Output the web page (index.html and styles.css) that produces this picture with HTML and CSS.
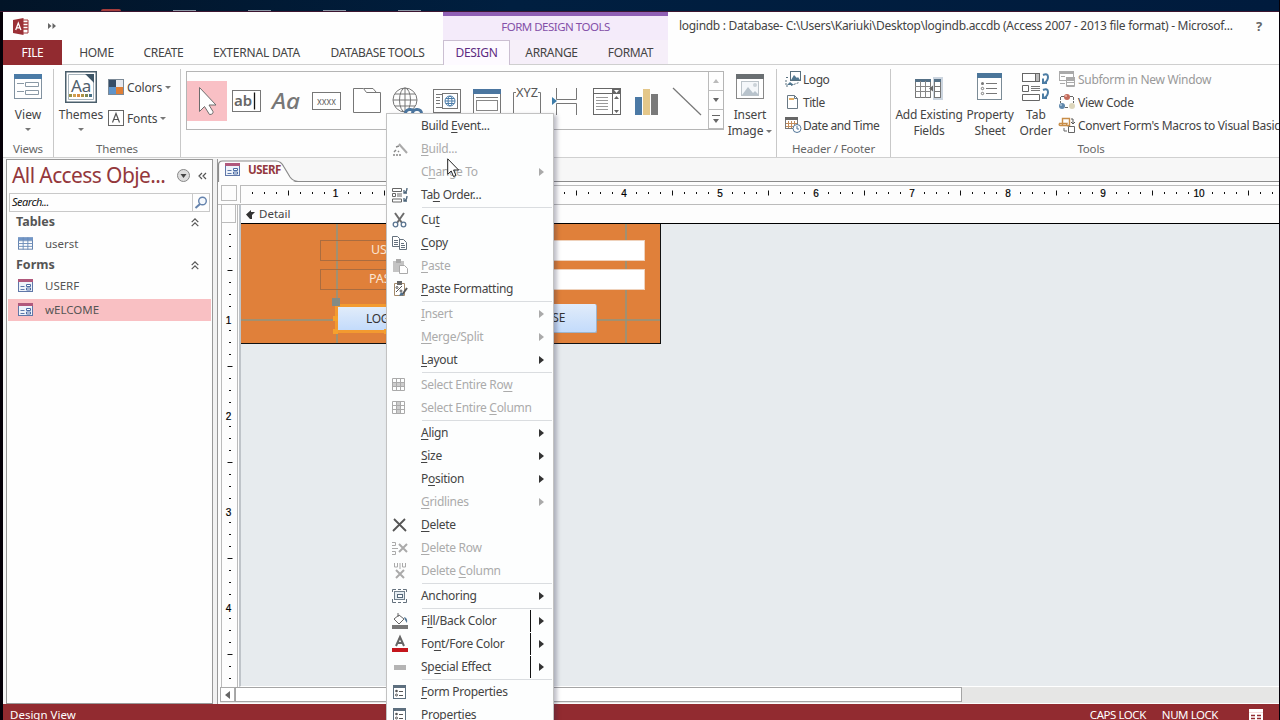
FILE: index.html
```
<!DOCTYPE html>
<html lang="en">
<head>
<meta charset="utf-8">
<title>logindb : Database</title>
<link rel="stylesheet" href="styles.css">
</head>
<body>
<svg width="0" height="0" class="defs">
  <defs>
    <symbol id="form" viewBox="0 0 15 14"><rect x=".5" y=".5" width="14" height="12" fill="#eef3fa" stroke="#6077a8"/><rect width="15" height="3" fill="#b0587c"/><path d="M2.500 7.500h4M2.500 10.500h4" stroke="#5b78aa"/><path d="M8.500 5.500h4v2h-4zM8.500 9h4v2h-4z" fill="#fff" stroke="#4c6ca5"/></symbol>
    <symbol id="props" viewBox="0 0 16 16"><rect x="1.500" y="1.500" width="12" height="13" fill="#fff" stroke="#5d6f7e"/><path d="M1 1h13v3H1z" fill="#5d6f7e"/><circle cx="4.500" cy="7" r="1.300" fill="#555"/><circle cx="4.500" cy="11" r="1" fill="none" stroke="#555"/><path d="M7 7.500h4M7 11.500h4" stroke="#555"/></symbol>
    <symbol id="taborder" viewBox="0 0 16 16"><path d="M.5 1.500h9v3h-9zM.5 6.500h3v3h-3zM.5 12h9v3h-9zM5 7h5M5 9h5" fill="none" stroke="#666"/><path d="M15 1q0 4-3 5m0-3v3h3M15 9q0 4-3 5m0-3v3h3" fill="none" stroke="#4a6378" stroke-width="1.300"/></symbol>
    <symbol id="up2" viewBox="0 0 8 9"><path d="M.7 4.200 4 .9l3.300 3.300M.7 8.200 4 4.900l3.300 3.300" fill="none" stroke="#555" stroke-width="1.200"/></symbol>
    <pattern id="hdots" width="96" height="20" patternUnits="userSpaceOnUse"><path d="M11.500 6v2M23.500 6v2M35.500 6v2M59.500 6v2M71.500 6v2M83.500 6v2M47.500 4.500v5" stroke="#111"/></pattern>
    <pattern id="vdots" y="-1" width="15" height="96" patternUnits="userSpaceOnUse"><path d="M7 12.500h2M7 24.500h2M7 36.500h2M7 60.500h2M7 72.500h2M7 84.500h2M5.500 48.500h5" stroke="#111"/></pattern>
  </defs>
</svg>
<div class="screen">
  <div class="desktop"><i class="red"></i><i></i><i></i><i></i><i></i></div>
  <div class="window">
    <header class="top">
      <div class="quick">
        <svg width="18" height="17" viewBox="0 0 18 17"><path d="M9 2h6v13H9z" fill="#fff" stroke="#a4373a"/><path d="M10 5h5M10 8h5M10 11h5" stroke="#a4373a" stroke-width="1.500"/><path d="M0 2 10.500 0v17L0 15z" fill="#9b3036"/><path d="M2.700 12 5.300 5l2.600 7M3.600 9.800h3.400" fill="none" stroke="#fff" stroke-width="1.300"/></svg>
        <svg width="8" height="6" viewBox="0 0 8 6"><path d="M0 0 3.500 3 0 6zM4.500 0 8 3 4.500 6z" fill="#666"/></svg>
      </div>
      <div class="context">FORM DESIGN TOOLS</div>
      <div class="title">logindb : Database- C:\Users\Kariuki\Desktop\logindb.accdb (Access 2007 - 2013 file format) - Microsof...</div>
      <div class="help">?</div>
    </header>
    <nav class="tabs">
      <span class="file">FILE</span><span class="t1">HOME</span><span class="t2">CREATE</span><span class="t3">EXTERNAL DATA</span><span class="t4">DATABASE TOOLS</span><span class="active">DESIGN</span><span class="t5">ARRANGE</span><span class="t6">FORMAT</span><span class="rest"></span>
    </nav>
    <section class="ribbon">
      <div class="group views">
        <div class="big"><svg width="28" height="26" viewBox="0 0 28 26"><rect x=".5" y=".5" width="27" height="24" fill="#fff" stroke="#8292a0"/><path d="M0 0h28v5H0z" fill="#4b7ba6"/><path d="M3 9.500h7M3 17.500h7" stroke="#8a99a5"/><path d="M11.500 8.500h13v4h-13zM11.500 16.500h13v4h-13z" fill="none" stroke="#8a99a5"/></svg><span>View</span><b class="caret"></b></div>
        <footer>Views</footer>
      </div>
      <div class="group themes">
        <div class="cols">
          <div class="big"><svg width="32" height="32" viewBox="0 0 32 32"><rect x=".75" y=".75" width="30.500" height="30.500" fill="#fff" stroke="#4b5f6c" stroke-width="1.500"/><path d="M3.500 28.500v-25h17l8 8v17z" fill="none" stroke="#a8b4bc"/><path d="M20 3h9v9z" fill="#3d5566"/><path d="M21 4v7h7z" fill="#fff"/><text x="6" y="21" font-size="17" fill="#50606c">Aa</text><g><path d="M4 23h3v3H4z" fill="#9a9448"/><path d="M8 23h3v3H8z" fill="#d0a050"/><path d="M12 23h3v3h-3z" fill="#d88b3e"/><path d="M16 23h3v3h-3z" fill="#b09344"/><path d="M20 23h3v3h-3z" fill="#7d8853"/><path d="M24 23h3v3h-3z" fill="#467088"/></g></svg><span>Themes</span><b class="caret"></b></div>
          <div class="stack">
            <div><svg width="16" height="16" viewBox="0 0 16 16"><path d="M0 0h16v16H0z" fill="#7b8996"/><path d="M1 1h7v7H1z" fill="#354c67"/><path d="M8 1h7v7H8z" fill="#e5e8ee"/><path d="M1 8h7v7H1z" fill="#5f94ca"/><path d="M8 8h7v7H8z" fill="#df7e36"/></svg><span>Colors</span><b class="caret"></b></div>
            <div><svg width="16" height="16" viewBox="0 0 16 16"><rect x=".5" y=".5" width="15" height="15" fill="#fff" stroke="#666"/><path d="M4.500 12.500 8 3.500l3.500 9M5.700 9.500h4.600" fill="none" stroke="#555" stroke-width="1.200"/></svg><span>Fonts</span><b class="caret"></b></div>
          </div>
        </div>
        <footer>Themes</footer>
      </div>
      <div class="group controls">
        <div class="gallery">
          <div class="cell sel"><svg width="30" height="40" viewBox="0 0 30 40"><path d="M7.500 6.500v24l5-5 5 8q4 0 3.500-3l-4-6.500h7z" fill="#fff" stroke="#6c6c6c" stroke-linejoin="round"/></svg></div>
          <div class="cell"><svg width="30" height="30" viewBox="0 0 30 30"><rect x=".5" y="4.500" width="28" height="21" fill="#fff" stroke="#777"/><text x="2" y="20" font-size="15" font-weight="600" fill="#666">ab</text><path d="M22.500 6.500v17" stroke="#111" stroke-width="1.300"/></svg></div>
          <div class="cell"><svg width="30" height="30" viewBox="0 0 30 30"><text x="0" y="23" font-size="22" font-style="italic" font-weight="500" fill="#777" textLength="28" lengthAdjust="spacingAndGlyphs">Aa</text></svg></div>
          <div class="cell"><svg width="30" height="30" viewBox="0 0 30 30"><rect x=".5" y="6.500" width="28" height="17" fill="#fff" stroke="#777"/><text x="5" y="18.500" font-size="11" fill="#666" textLength="19" lengthAdjust="spacingAndGlyphs">xxxx</text></svg></div>
          <div class="cell"><svg width="30" height="30" viewBox="0 0 30 30"><path d="M1.500 26.500v-24h10l3 4h14v20z" fill="#fff" stroke="#777"/><path d="M12 2.500h9l3 3.500" fill="none" stroke="#777"/></svg></div>
          <div class="cell"><svg width="32" height="30" viewBox="0 0 32 30"><g fill="none" stroke="#777"><circle cx="14" cy="14" r="12"/><ellipse cx="14" cy="14" rx="5.500" ry="12"/><path d="M14 2v24M2 14h24M4 8h20M4 20h20"/></g><g fill="#fff" stroke="#4b769f" stroke-width="3"><rect x="14.500" y="23.500" width="9" height="8" rx="4"/><rect x="21.500" y="23.500" width="9" height="8" rx="4"/></g></svg></div>
          <div class="cell"><svg width="30" height="30" viewBox="0 0 30 30"><rect x="1.500" y="3.500" width="27" height="23" fill="#fff" stroke="#777"/><path d="M4 8.500h6M4 11.500h4M4 14.500h4M4 17.500h4M4 21.500h6" stroke="#777"/><rect x="10.500" y="7.500" width="15" height="15" fill="#fff" stroke="#777"/><g fill="none" stroke="#4c7da9"><circle cx="18" cy="15" r="5"/><ellipse cx="18" cy="15" rx="2" ry="5"/><path d="M13 15h10M14 12.500h8M14 17.500h8"/></g></svg></div>
          <div class="cell"><svg width="30" height="30" viewBox="0 0 30 30"><rect x="1.500" y="3.500" width="27" height="24" fill="#fff" stroke="#777"/><path d="M1 3h28v5H1z" fill="#4b76a0"/><path d="M4 11.500h22" stroke="#777"/><rect x="4.500" y="14.500" width="21" height="10" fill="none" stroke="#888"/></svg></div>
          <div class="cell"><svg width="30" height="30" viewBox="0 0 30 30"><path d="M4 6.500H1.500v22h27v-22H26" fill="none" stroke="#777"/><text x="4" y="11" font-size="12" fill="#555" textLength="22" lengthAdjust="spacingAndGlyphs">XYZ</text></svg></div>
          <div class="cell"><svg width="30" height="30" viewBox="0 0 30 30"><path d="M4.500 2v11.500h20V2M4.500 29V17.500h20V29" fill="none" stroke="#777"/><path d="m0 11 5 4-5 4z" fill="#3e7da9"/></svg></div>
          <div class="cell"><svg width="30" height="30" viewBox="0 0 30 30"><rect x="1.500" y="2.500" width="27" height="26" fill="#fff" stroke="#666"/><path d="M1 7.500h28M20.500 2v26" stroke="#666"/><path d="M20 3h8v5h-8z" fill="#666"/><path d="m22 4 2.500 3L27 4z" fill="#fff"/><path d="M4 11.500h12M4 14.500h12M4 17.500h12M4 20.500h12M4 23.500h12" stroke="#999"/><path d="m22 13 2.500-3 2.500 3zM22 24l2.500 3 2.500-3z" fill="#666"/></svg></div>
          <div class="cell"><svg width="30" height="30" viewBox="0 0 30 30"><path d="M3 11h7v18H3z" fill="#4b79a5"/><path d="M11 3h7v26h-7z" fill="#e4c78a"/><path d="M19 8h7v21h-7z" fill="#7a7a7a"/></svg></div>
          <div class="cell"><svg width="30" height="30" viewBox="0 0 30 30"><path d="m1 2 28 27" stroke="#777" stroke-width="1.200"/></svg></div>
          <div class="scroll"><span><svg width="6" height="4"><path d="m0 4 3-4 3 4z" fill="#bbb"/></svg></span><span><svg width="6" height="4"><path d="m0 0 3 4 3-4z" fill="#666"/></svg></span><span><svg width="8" height="8"><path d="M0 .5h8" stroke="#666"/><path d="m1 4 3 4 3-4z" fill="#666"/></svg></span></div>
        </div>
        <div class="big insert"><svg width="28" height="26" viewBox="0 0 28 26"><rect x=".5" y=".5" width="27" height="24" fill="#fff" stroke="#888"/><path d="M0 0h28v5H0z" fill="#6a6f72"/><rect x="5.500" y="7.500" width="17" height="14" fill="#f4f7fa" stroke="#bcc4ca"/><path d="m6 21 6-8 5 6 2-2 4 4z" fill="#b8c3cc"/><circle cx="19" cy="11" r="2" fill="#cbd3d9"/></svg><span>Insert</span><span>Image <b class="caret"></b></span></div>
      </div>
      <div class="group hf">
        <div class="list">
          <div><svg width="16" height="16" viewBox="0 0 16 16"><rect x="5.500" y=".5" width="10" height="9" fill="#fff" stroke="#58707e"/><path d="m6 9 3-5 3 3 1-1 2 3z" fill="#527891"/><path d="M1 6.500h3M1 9v6h3M6 14.500l8-3" fill="none" stroke="#58707e" stroke-dasharray="2 1"/><path d="m2 14 3-3 4 3z" fill="#527891"/></svg><span>Logo</span></div>
          <div><svg width="16" height="16" viewBox="0 0 16 16"><path d="M2.500 1.500h7l3 3v10h-10z" fill="#fff" stroke="#697985"/><path d="M9.500 1.500v3h3" fill="none" stroke="#697985"/><path d="M4 5h5" stroke="#e4ae62" stroke-width="2"/></svg><span>Title</span></div>
          <div><svg width="16" height="16" viewBox="0 0 16 16"><rect x=".5" y=".5" width="12" height="11" fill="#fff" stroke="#777"/><path d="M0 0h13v3H0z" fill="#666"/><path d="M3.500 4v7M6.500 4v7M9.500 4v7M1 6.500h11M1 9.500h11" stroke="#c38c5b"/><circle cx="12" cy="11.500" r="4" fill="#fff" stroke="#53779a"/><path d="M12 9v3h2" fill="none" stroke="#53779a"/></svg><span>Date and Time</span></div>
        </div>
        <footer>Header / Footer</footer>
      </div>
      <div class="group tools">
        <div class="cols">
          <div class="big add"><svg width="28" height="28" viewBox="0 0 28 28"><path d="M18 1h10v23H18z" fill="#ccd5df"/><rect x=".5" y="3.500" width="15" height="18" fill="#fff" stroke="#777"/><path d="M0 3h16v3H0z" fill="#557086"/><path d="M0 10.500h16M0 15.500h16M5.500 5v17M10.500 5v17" stroke="#888"/><rect x="19.500" y="3.500" width="6" height="18" fill="#fff" stroke="#777"/><path d="M19 3h7v3h-7z" fill="#557086"/><path d="M19 10.500h7M19 15.500h7" stroke="#777"/><path d="m14 12.500 4-3v6z" fill="#666"/></svg><span>Add Existing</span><span>Fields</span></div>
          <div class="big prop"><svg width="26" height="28" viewBox="0 0 26 28"><rect x=".5" y=".5" width="24" height="26" fill="#fff" stroke="#7b8b96"/><path d="M0 0h25v5H0z" fill="#4b769a"/><circle cx="5.500" cy="10.500" r="1.500" fill="#777"/><circle cx="5.500" cy="15.500" r="1.200" fill="none" stroke="#777"/><circle cx="5.500" cy="20.500" r="1.200" fill="none" stroke="#777"/><path d="M9 10.500h11M9 15.500h11M9 20.500h11" stroke="#777"/></svg><span>Property</span><span>Sheet</span></div>
          <div class="big order"><svg width="28" height="29" viewBox="0 0 28 29"><rect x=".5" y=".5" width="17" height="8" fill="#fff" stroke="#666"/><path d="M14 1h3v7h-3z" fill="#bbb"/><path d="M13.500 0v9" stroke="#666"/><path d="M.5 12.500h6v6h-6zM.5 21.500h17v6H.5z" fill="#fff" stroke="#666"/><path d="M9 13.500h9M9 15.500h9M9 17.500h9" stroke="#777"/><path d="M21 2q5-2 5 2t-4 6m-1-4.500V10h4M21 17q5-2 5 2t-4 6m-1-4.500V25h4" fill="none" stroke="#4b7ca4" stroke-width="2"/></svg><span>Tab</span><span>Order</span></div>
          <div class="list">
            <div class="off"><svg width="16" height="16" viewBox="0 0 16 16"><rect x=".5" y=".5" width="14" height="9" fill="#fff" stroke="#aaa"/><path d="M0 0h15v3H0zM7 6h9v3H7z" fill="#aaa"/><path d="M2 5.500h4M1 12.500h5M8 11.500h7M8 14.500h7M7.500 8v7.500h8V8" fill="none" stroke="#aaa"/></svg><span>Subform in New Window</span></div>
            <div><svg width="16" height="16" viewBox="0 0 16 16"><path d="M5 2.500H1.500V9M11 2.500h3.500V9M6 13.500h4" fill="none" stroke="#666" stroke-dasharray="3 1"/><circle cx="8" cy="3" r="3" fill="#c36b5b"/><circle cx="3" cy="12" r="3" fill="#6088ac"/><circle cx="13" cy="12" r="3" fill="#ddd6bb"/><circle cx="7" cy="2" r="1" fill="#efb4a9"/><circle cx="2" cy="11" r="1" fill="#adc5d9"/></svg><span>View Code</span></div>
            <div><svg width="16" height="16" viewBox="0 0 16 16"><path d="M3.500 9V1.500h7v7H1.500q-2 0-1-2H8q-1 2 1 2.500" fill="none" stroke="#c88d47" stroke-width="1.400"/><path d="M12 2h2v5m-2-2 2 2 2-2" fill="none" stroke="#555"/><path d="M9.500 9.500h6v6h-6zM5 11v3h3" fill="none" stroke="#666"/></svg><span>Convert Form's Macros to Visual Basic</span></div>
          </div>
        </div>
        <footer>Tools</footer>
      </div>
    </section>
    <main class="work">
      <aside class="nav">
        <h1><span>All Access Obje...</span><svg width="13" height="13" viewBox="0 0 13 13"><circle cx="6.500" cy="6.500" r="6" fill="#ddd" stroke="#888"/><path d="m3.500 5 3 4 3-4z" fill="#444"/></svg><svg width="9" height="8" viewBox="0 0 9 8"><path d="M4 1 1 4l3 3M8 1 5 4l3 3" fill="none" stroke="#555" stroke-width="1.200"/></svg></h1>
        <div class="search"><span>Search...</span><i><svg width="14" height="13" viewBox="0 0 14 13"><circle cx="8.500" cy="5" r="3.800" fill="#f4f8fd" stroke="#6583ad" stroke-width="1.400"/><path d="m6 8-4.500 4" stroke="#6583ad" stroke-width="2"/></svg></i></div>
        <div class="head">Tables<svg width="8" height="9"><use href="#up2"/></svg></div>
        <div class="item"><svg width="16" height="14" viewBox="0 0 16 14"><rect x=".5" y=".5" width="15" height="12" fill="#fff" stroke="#5d7daa"/><path d="M0 0h16v3H0z" fill="#7196c7"/><path d="M0 3.500h16M0 6.500h16M0 9.500h16M5.500 0v13M10.500 0v13" stroke="#6b8cb8"/></svg>userst</div>
        <div class="head forms">Forms<svg width="8" height="9"><use href="#up2"/></svg></div>
        <div class="item f"><svg width="15" height="14"><use href="#form"/></svg>USERF</div>
        <div class="item on"><svg width="15" height="14"><use href="#form"/></svg>wELCOME</div>
      </aside>
      <div class="splitter"></div>
      <section class="doc">
        <div class="doctabs">
          <svg class="tabshape" width="80" height="26" viewBox="0 0 80 26"><path d="M.5 25V5q0-4 4-4H58q5 0 8 6l6 11q3 4 8 4.500V26H0z" fill="#fdfdfd"/><path d="M.5 25V5q0-4 4-4H58q5 0 8 6l6 10q3 4 8 4.500" fill="none" stroke="#8b8b8b" stroke-width="1.200"/></svg>
          <div class="doctab"><svg width="15" height="14"><use href="#form"/></svg>USERF</div>
        </div>
        <div class="hrule"><i></i><svg width="1039" height="18"><rect width="1039" height="18" fill="url(#hdots)"/><g><text x="94.500" y="11">1</text><text x="191" y="11">2</text><text x="287" y="11">3</text><text x="383" y="11">4</text><text x="479" y="11">5</text><text x="575" y="11">6</text><text x="671" y="11">7</text><text x="767" y="11">8</text><text x="862" y="11">9</text><text x="958" y="11">10</text></g></svg></div>
        <div class="canvasrow">
          <div class="vrule"><i></i><svg width="15" height="464"><rect width="15" height="464" fill="url(#vdots)"/><g><text x="6.500" y="101">1</text><text x="6.500" y="197">2</text><text x="6.500" y="293">3</text><text x="6.500" y="389">4</text></g></svg></div>
          <div class="canvas">
            <div class="detail"><svg width="9" height="9" viewBox="0 0 9 9"><path d="M5 0v2h4L6 5v4H4L0 4.500z" fill="#333"/></svg>Detail</div>
            <div class="form">
              <i class="guide v1"></i><i class="guide v2"></i><i class="guide h"></i>
              <div class="lab a"><span>USERNAME</span></div><div class="box a"></div>
              <div class="lab b"><span>PASSWORD</span></div><div class="box b"></div>
              <div class="btn login">LOGIN</div><div class="btn close">CLOSE</div>
              <i class="sq"></i>
              <i class="grip g1"></i><i class="grip g2"></i><i class="grip g3"></i>
            </div>
          </div>
        </div>
        <div class="hscroll"><b><svg width="5" height="8"><path d="M5 0v8L0 4z" fill="#666"/></svg></b><i></i></div>
      </section>
    </main>
    <div class="status"><span>Design View</span><span class="caps">CAPS LOCK</span><span>NUM LOCK</span><svg width="14" height="12" viewBox="0 0 14 12"><path d="M0 0h14v12H0z" fill="#fff"/><path d="M0 3.500h14" stroke="#f4dada"/><path d="M2 6.500h4M2 9.500h4M8 6.500h4M8 9.500h4" stroke="#922b30" stroke-width="1.500"/></svg></div>
  </div>
  <div class="menu">
    <div><i></i>Build <u>E</u>vent...</div>
    <div class="off"><i><svg width="16" height="16" viewBox="0 0 16 16"><path d="m7 3 8 9" stroke="#aaa" stroke-width="2"/><path d="M1 14h2M4 14h2M7 14h2M2 11l2-2M4 6l3-1M6 10l1 1" stroke="#888" stroke-width="1.500"/></svg></i><u>B</u>uild...</div>
    <div class="off sub"><i></i>C<u>h</u>ange To</div>
    <div><i><svg width="16" height="16"><use href="#taborder"/></svg></i>Ta<u>b</u> Order...</div>
    <hr>
    <div><i><svg width="16" height="16" viewBox="0 0 16 16"><path d="m3 1 7 10M12 1 5 11" stroke="#6c6c6c" stroke-width="2"/><circle cx="3.500" cy="12.500" r="2.300" fill="#fff" stroke="#5a7591" stroke-width="1.300"/><circle cx="11.500" cy="12.500" r="2.300" fill="#fff" stroke="#5a7591" stroke-width="1.300"/></svg></i>Cu<u>t</u></div>
    <div><i><svg width="16" height="16" viewBox="0 0 16 16"><path d="M.5 1.500h5l2 2v8h-7zM7.500 4.500h4l3 3v7h-7z" fill="#fff" stroke="#64717d"/><path d="M2 5.500h4M2 7.500h4M2 9.500h4M9 8.500h3M9 10.500h4M9 12.500h4" stroke="#64717d"/></svg></i><u>C</u>opy</div>
    <div class="off"><i><svg width="16" height="16" viewBox="0 0 16 16"><path d="M1 3h11v11H1z" fill="#c4c4c4"/><path d="M4 1h5v4H4z" fill="#aaa"/><path d="M7.500 7.500h5l3 3v5h-8z" fill="#fff" stroke="#aaa"/></svg></i><u>P</u>aste</div>
    <div><i><svg width="16" height="16" viewBox="0 0 16 16"><path d="M2.500 2.500h10v12h-10z" fill="#fff" stroke="#a48b6c"/><path d="M5 0h5v4H5z" fill="#666"/><path d="m4 11 6-6" stroke="#555"/><circle cx="5" cy="6.500" r="1" fill="none" stroke="#555"/><circle cx="9" cy="10" r="1" fill="none" stroke="#555"/><path d="m15 7-5 7" stroke="#555" stroke-width="2"/><path d="m7 15 2-4 3 3z" fill="#4e7190"/></svg></i><u>P</u>aste Formatting</div>
    <hr>
    <div class="off sub"><i></i><u>I</u>nsert</div>
    <div class="off sub"><i></i><u>M</u>erge/Split</div>
    <div class="sub"><i></i><u>L</u>ayout</div>
    <hr>
    <div class="off"><i><svg width="14" height="14" viewBox="0 0 14 14"><path d="M1 5h12v4H1z" fill="#ccc"/><path d="M.5.5h12v12H.5zM0 4.500h13M0 8.500h13M4.500 0v13M8.500 0v13" fill="none" stroke="#aaa"/></svg></i>Select Entire Ro<u>w</u></div>
    <div class="off"><i><svg width="14" height="14" viewBox="0 0 14 14"><path d="M5 1h4v12H5z" fill="#ccc"/><path d="M.5.5h12v12H.5zM0 4.500h13M0 8.500h13M4.500 0v13M8.500 0v13" fill="none" stroke="#aaa"/></svg></i>Select Entire <u>C</u>olumn</div>
    <hr>
    <div class="sub"><i></i><u>A</u>lign</div>
    <div class="sub"><i></i><u>S</u>ize</div>
    <div class="sub"><i></i>P<u>o</u>sition</div>
    <div class="off sub"><i></i><u>G</u>ridlines</div>
    <div><i><svg width="16" height="16" viewBox="0 0 16 16"><path d="m2 2 12 12M13 2 1 14" stroke="#555" stroke-width="1.800"/></svg></i><u>D</u>elete</div>
    <div class="off"><i><svg width="16" height="16" viewBox="0 0 16 16"><path d="m7 4 8 8M15 4l-8 8" stroke="#aaa" stroke-width="2"/><path d="M0 2.500h3.500v3H0M0 8.500h6M0 11.500h3.500v3H0" fill="none" stroke="#aaa"/></svg></i><u>D</u>elete Row</div>
    <div class="off"><i><svg width="16" height="16" viewBox="0 0 16 16"><path d="m4 7 8 8M12 7l-8 8" stroke="#aaa" stroke-width="2"/><path d="M2.500 0v4h3V0M8 0v6M10.500 0v4h3V0" fill="none" stroke="#aaa"/></svg></i>Delete <u>C</u>olumn</div>
    <hr>
    <div class="sub"><i><svg width="16" height="16" viewBox="0 0 16 16"><path d="M.5 4V1.500H4M11 1.500h3.500V4M.5 11v3.500H4M11 14.500h3.500V11M6 1.500h3M6 14.500h3" fill="none" stroke="#64717d"/><rect x="2.500" y="3.500" width="10" height="8" fill="#e6edf2" stroke="#71808c"/><rect x="5.500" y="6.500" width="5" height="3" fill="#fff" stroke="#56697a"/></svg></i>Anchoring</div>
    <hr>
    <div class="sub split"><i><svg width="16" height="16" viewBox="0 0 16 16"><path d="m2 6 5-4 5 4-5 5zM6 0v4" fill="#fff" stroke="#666"/><path d="M12 4q4 1 3 6l-2-3z" fill="#4f7494"/><path d="M0 12h16v4H0z" fill="#777"/></svg></i>F<u>il</u>l/Back Color</div>
    <div class="sub split"><i><svg width="16" height="16" viewBox="0 0 16 16"><path d="m4 10 4-9 4 9M5.500 7h5" fill="none" stroke="#666" stroke-width="2"/><path d="M0 12h16v4H0z" fill="#c4161c"/></svg></i>Fo<u>n</u>t/Fore Color</div>
    <div class="sub split"><i><svg width="16" height="16" viewBox="0 0 16 16"><path d="M2 6h12v5H2z" fill="#b4b4b4"/></svg></i>Sp<u>e</u>cial Effect</div>
    <hr>
    <div><i><svg width="16" height="16"><use href="#props"/></svg></i><u>F</u>orm Properties</div>
    <div><i><svg width="16" height="16"><use href="#props"/></svg></i>Propert<u>i</u>es</div>
  </div>
  <svg class="pointer" width="13" height="20" viewBox="0 0 13 20"><path d="M.7.8v15.500l3.500-3.300 2.300 5.500 2.500-1-2.400-5.500h5z" fill="#fff" stroke="#222"/></svg>
</div>
</body>
</html>
```
FILE: styles.css
```
* { box-sizing: border-box; }
body { margin: 0; font: 12px/16px "Noto Sans", "Open Sans", sans-serif; letter-spacing: -0.1px; color: #444; }
svg { flex: none; display: block; overflow: visible; }
.defs { position: absolute; }
.screen { position: relative; width: 1280px; height: 720px; overflow: hidden; background: #050008; padding: 0 1px 0 3px; display: flex; flex-direction: column; }
.desktop { height: 12px; flex: none; margin-left: -3px; background: linear-gradient(90deg, #021427, #001f40 40%, #001b3d); display: flex; align-items: flex-end; gap: 52px; padding-left: 101px; border-bottom: 1px solid #3c1630; }
.desktop i { width: 23px; height: 1px; background: #8b97a5; }
.desktop i.red { width: 20px; height: 2px; background: #a63d3c; border-radius: 8px 8px 0 0; }
.window { flex: 1; min-height: 0; background: #fefefe; display: flex; flex-direction: column; }

.top { height: 28px; flex: none; display: flex; align-items: center; }
.quick { width: 440px; padding-left: 10px; display: flex; align-items: center; gap: 17px; }
.context { width: 225px; height: 28px; border-top: 4px solid #8f5fb4; background: #f4ebfa; color: #8450a8; text-align: center; line-height: 22px; font-size: 11.5px; letter-spacing: -0.5px; }
.title { width: 573px; padding: 0 0 0 11px; white-space: nowrap; font-size: 12px; line-height: 28px; letter-spacing: -0.295px; }
.help { margin-left: 15px; font-weight: 700; font-size: 13px; color: #666; }

.tabs { height: 25px; flex: none; display: flex; line-height: 25px; letter-spacing: -0.35px; }
.tabs span { text-align: center; border-bottom: 1px solid #cfcfcf; white-space: nowrap; flex: none; }
.tabs .file { width: 59px; background: #922b30; color: #fff; border-color: #922b30; }
.t1 { width: 69px; } .t2 { width: 65px; } .t3 { width: 121px; } .t4 { width: 126px; padding-right: 5px; }
.tabs .t3 { letter-spacing: -0.2px; }
.tabs .active { width: 67px; background: #fdfaff; border: 1px solid #cbbfd2; border-bottom: 0; line-height: 23px; color: #5e2c82; }
.tabs .t5 { width: 83px; background: #f6eff9; }
.tabs .t6 { width: 75px; background: #f6eff9; }
.tabs .rest { flex: 1; }

.ribbon { height: 93px; flex: none; display: flex; border-bottom: 1px solid #d0d0d0; overflow: hidden; letter-spacing: 0; }
.group { display: flex; flex-direction: column; position: relative; flex: none; border-right: 1px solid #c8c8c8; height: 88px; margin-top: 4px; padding-top: 2px; }
.group footer { margin-top: auto; height: 17px; line-height: 17px; text-align: center; color: #666; font-size: 11.5px; letter-spacing: -0.15px; }
.views { width: 51px; } .themes { width: 127px; } .hf { width: 114px; }
.controls { width: 596px; flex-direction: row; padding: 2px 0 0 5px; }
.tools { width: 388px; border: 0; }
.cols { display: flex; }
.tools .cols { height: 66px; }
.tools .cols > * { flex: none; }
.big { display: flex; flex-direction: column; align-items: center; white-space: nowrap; }
.big > svg { height: 26px; margin-bottom: 7px; }
.big span { line-height: 16px; }
.caret { display: inline-block; width: 0; height: 0; border: 3px solid transparent; border-top: 3px solid #777; border-bottom: 0; vertical-align: middle; }
.big > .caret { margin-top: 5px; }
.views .big { padding-top: 3px; }
.themes .big { width: 54px; }
.themes .big > svg { height: 32px; margin-bottom: 4px; }
.stack { padding: 8px 0 0 0; display: flex; flex-direction: column; gap: 15px; letter-spacing: -0.15px; }
.stack div { display: flex; align-items: center; gap: 3px; height: 16px; }
.stack span { position: relative; top: 1px; }
.gallery { width: 538px; height: 59px; border: 1px solid #b5b5b5; display: flex; align-items: center; flex: none; overflow: hidden; }
.cell { width: 40px; height: 40px; display: flex; align-items: center; justify-content: center; flex: none; }
.cell.sel { background: #f9c0c5; }
.scroll { margin-left: auto; align-self: stretch; width: 15px; border-left: 1px solid #bbb; display: flex; flex-direction: column; flex: none; background: #fefefe; }
.scroll span { flex: 1; display: flex; align-items: center; justify-content: center; border-bottom: 1px solid #bbb; }
.insert { width: 52px; padding-top: 3px; letter-spacing: -0.1px; }
.list { display: flex; flex-direction: column; gap: 7px; padding-left: 8px; letter-spacing: -0.3px; }
.list div { display: flex; align-items: center; height: 16px; gap: 3px; white-space: nowrap; }
.list span { position: relative; top: 1px; }
.hf .list div { gap: 2px; letter-spacing: -0.45px; }
.tools .off { color: #999; }
.add { width: 76px; padding-top: 5px; letter-spacing: -0.2px; } .add > svg { height: 28px; margin-bottom: 3px; }
.prop { width: 46px; padding-top: 2px; letter-spacing: -0.2px; } .prop > svg { height: 28px; margin-bottom: 6px; }
.order { width: 46px; padding-top: 2px; } .order > svg { height: 29px; margin-bottom: 5px; }
.tools .list { padding-left: 0; }
.tools footer { width: 400px; }

.work { flex: 1; min-height: 0; display: flex; background: #f7f7f7; padding-left: 3px; }
.nav { width: 207px; background: #fefefe; border: 1px solid #999; padding: 0 1px; margin-top: 1px; letter-spacing: 0; }
.nav h1 { margin: 0; height: 33px; display: flex; align-items: center; font-weight: 400; font-size: 21px; line-height: 33px; color: #94383c; padding-left: 4px; gap: 8px; white-space: nowrap; }
.nav h1 span { width: 157px; letter-spacing: -0.6px; position: relative; top: -1px; }
.nav h1 svg { position: relative; top: -1px; }
.search { height: 19px; width: 201px; margin-left: 1px; border: 1px solid #c9c9c9; display: flex; line-height: 16px; font-size: 11px; font-style: italic; color: #111; padding-left: 2px; letter-spacing: -0.5px; }
.search span { flex: 1; }
.search i { border-left: 1px solid #c9c9c9; width: 17px; padding: 2px 1px; }
.head { font-weight: 700; font-size: 12.5px; height: 20px; line-height: 20px; padding: 0 12px 0 8px; display: flex; justify-content: space-between; align-items: center; color: #555; }
.item { height: 24px; padding-left: 10px; display: flex; align-items: center; width: 203px; gap: 12px; color: #555; font-size: 11.5px; }
.item svg { width: 15px; }
.head.forms { height: 18px; }
.item.on { background: #f9c0c3; height: 22px; margin-top: 1px; }
.splitter { width: 5px; background: #f2f2f2; border-right: 1px solid #999; margin-top: 1px; }
.doc { flex: 1; min-width: 0; background: #fdfdfd; display: flex; flex-direction: column; }
.doctabs { height: 24px; background: #f7f7f7; flex: none; position: relative; border-bottom: 1px solid #8b8b8b; padding-top: 2px; }
.tabshape { position: absolute; left: 0; top: 2px; }
.doctab { position: relative; display: flex; gap: 8px; align-items: center; padding: 2px 0 0 7px; font-weight: 700; font-size: 11.5px; letter-spacing: -0.5px; color: #943940; }
.hrule { position: relative; height: 23px; flex: none; display: flex; padding: 3px 0 0 3px; gap: 3px; border-bottom: 1px solid #bbb; background: #fdfdfd; }
.hrule i { width: 16px; height: 16px; border: 1px solid #bbb; }
.hrule svg { border-top: 1px solid #bbb; border-left: 1px solid #bbb; height: 18px; overflow: hidden; }
.hrule text, .vrule text { font: 10px "Liberation Sans", sans-serif; fill: #000; text-anchor: middle; stroke: #000; stroke-width: .2px; }
.canvasrow { flex: 1; min-height: 0; display: flex; gap: 1px; padding-left: 3px; }
.vrule { width: 17px; border: 1px solid #bbb; border-width: 0 1px; overflow: hidden; }
.vrule i { display: block; width: 14px; height: 18px; border: 1px solid #bbb; border-width: 0 1px 1px 0; }
.canvas { flex: 1; background: #e7ebee; border-left: 2px solid #bfc4c9; border-bottom: 1px solid #fff; }
.detail { background: #fdfdfd; height: 19px; border-bottom: 1px solid #000; display: flex; align-items: center; gap: 4px; padding: 0 0 0 5px; font-size: 11.5px; line-height: 18px; letter-spacing: 0; }
.form { width: 420px; height: 120px; background: #e0803a; border: 1px solid #111; border-top: 0; border-left: 0; position: relative; overflow: hidden; }
.form > * { position: absolute; }
.guide { background: #8c9684; opacity: .75; }
.v1 { left: 95px; top: 0; width: 2px; height: 120px; }
.v2 { left: 384px; top: 0; width: 2px; height: 120px; }
.h { left: 0; top: 95px; width: 420px; height: 2px; }
.lab { left: 79px; width: 140px; height: 21px; border: 1px solid #aa6c3f; color: #fbe5d2; line-height: 18px; padding-left: 50px; font-size: 12.5px; }
.lab.b { padding-left: 48px; }
.box { left: 230px; width: 174px; height: 21px; background: #fff; border: 1px solid #efd2bc; }
.form .a { top: 16px; } .form .b { top: 45px; }
.btn { top: 80px; height: 29px; background: linear-gradient(#e1ecfa, #c3dbfb); color: #333; border-radius: 2px; line-height: 28px; font-size: 12px; letter-spacing: -0.3px; }
.login { left: 94px; width: 120px; border: 3px solid #f39a30; padding-left: 28px; line-height: 23px; }
.close { left: 230px; width: 126px; padding-right: 31px; text-align: right; border: 1px solid #9fb4ca; border-width: 0 1px 1px 0; }
.sq { left: 91px; top: 74px; width: 8px; height: 8px; background: #828b86; }
.grip { width: 5px; height: 5px; background: #f6a12c; }
.g1 { left: 92px; top: 92px; } .g2 { left: 92px; top: 105px; } .g3 { left: 143px; top: 105px; }
.hscroll { height: 16px; margin: 0 0 1px 2px; flex: none; background: #e6e6e5; display: flex; }
.hscroll b { width: 15px; border: 1px solid #aaa; background: #fff; display: flex; align-items: center; justify-content: center; margin-bottom: 1px; }
.hscroll i { width: 727px; background: #fff; border: 1px solid #a5a5a5; margin-bottom: 1px; }

.status { height: 16px; flex: none; background: #922b30; color: #fff; display: flex; align-items: center; padding: 6px 16px 0 7px; white-space: nowrap; font-size: 11.5px; }
.status .caps { margin-left: auto; margin-right: 16px; }
.status span { letter-spacing: -0.45px; }
.status span:first-child { letter-spacing: 0; }
.status svg { margin-left: 31px; }

.menu { position: absolute; left: 386px; top: 113px; width: 168px; height: 620px; background: #fdfefe; border: 1px solid #c2c2c2; box-shadow: 3px 2px 4px rgba(40,40,70,.3); padding-top: 1px; letter-spacing: -0.3px; }
.menu div { height: 23px; line-height: 22px; display: block; white-space: nowrap; position: relative; }
.menu i { display: inline-flex; width: 34px; height: 20px; padding-left: 5px; align-items: center; vertical-align: top; margin-top: 1px; }
.menu hr { height: 1px; border: 0; background: #dadde0; margin: 0 1px 1px 35px; }
.menu .off { color: #ababab; }
.menu u { text-underline-offset: 2px; text-decoration-thickness: 1px; }
.menu .sub::after { content: ""; position: absolute; right: 9px; top: 7px; border: 4px solid transparent; border-left: 5px solid #333; border-right: 0; }
.menu .off.sub::after { border-left-color: #aaa; }
.menu .split::before { content: ""; position: absolute; left: 143px; top: 0; width: 1px; height: 22px; background: #111; }
.pointer { position: absolute; left: 447px; top: 158px; }
```
